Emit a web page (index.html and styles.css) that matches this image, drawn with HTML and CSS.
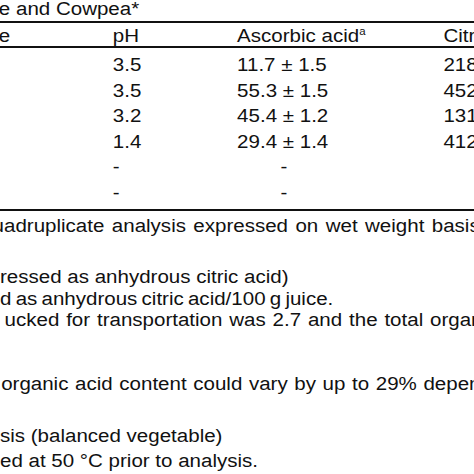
FILE: index.html
```html
<!DOCTYPE html>
<html lang="en">

<head>
    <meta charset="UTF-8">
    <meta name="viewport" content="width=device-width, initial-scale=1.0">
    <title>Table - Juice and Cowpea</title>
    <link rel="stylesheet" href="styles.css">
</head>

<body>
    <div class="sheet">
        <div class="caption">e and Cowpea*</div>

        <div class="table">
            <div class="row head">
                <div class="cell first">e</div>
                <div class="cell">pH</div>
                <div class="cell">Ascorbic acid<sup>a</sup></div>
                <div class="cell">Citric acid</div>
            </div>
            <div class="body">
                <div class="row">
                    <div class="cell first"></div>
                    <div class="cell">3.5</div>
                    <div class="cell">11.7 ± 1.5</div>
                    <div class="cell">218</div>
                </div>
                <div class="row">
                    <div class="cell first"></div>
                    <div class="cell">3.5</div>
                    <div class="cell">55.3 ± 1.5</div>
                    <div class="cell">452</div>
                </div>
                <div class="row">
                    <div class="cell first"></div>
                    <div class="cell">3.2</div>
                    <div class="cell">45.4 ± 1.2</div>
                    <div class="cell">131</div>
                </div>
                <div class="row">
                    <div class="cell first"></div>
                    <div class="cell">1.4</div>
                    <div class="cell">29.4 ± 1.4</div>
                    <div class="cell">412</div>
                </div>
                <div class="row">
                    <div class="cell first"></div>
                    <div class="cell">-</div>
                    <div class="cell dash">-</div>
                    <div class="cell"></div>
                </div>
                <div class="row">
                    <div class="cell first"></div>
                    <div class="cell">-</div>
                    <div class="cell dash">-</div>
                    <div class="cell"></div>
                </div>
            </div>
        </div>

        <div class="notes">
            <div class="note n1">quadruplicate analysis expressed on wet weight basis</div>
            <div class="note n2">ressed as anhydrous citric acid)</div>
            <div class="note n3">d as anhydrous citric acid/100 g juice.</div>
            <div class="note n4">ucked for transportation was 2.7 and the total organic</div>
            <div class="note n5">organic acid content could vary by up to 29% depending</div>
            <div class="note n6">sis (balanced vegetable)</div>
            <div class="note n7">ed at 50 °C prior to analysis.</div>
        </div>
    </div>
</body>

</html>
```

FILE: styles.css
```css
body {
    margin: 0;
    padding: 0;
    background-color: #fff;
    overflow: hidden;
    font-family: "Liberation Sans", Arial, sans-serif;
    font-size: 18px;
    color: #111;
}

/* the scan is stretched sideways a little */
.sheet {
    width: 420px;
    transform: scaleX(1.14);
    transform-origin: 0 0;
}

.caption {
    line-height: 18px;
    margin-bottom: 3px;
    margin-left: -1px;
    white-space: nowrap;
}

.table {
    border-top: 2px solid #111;
    border-bottom: 2px solid #111;
}

.row {
    display: grid;
    grid-template-columns: 99px 109px 181px 1fr;
    white-space: nowrap;
}

.head {
    padding-top: 3px;
    line-height: 20px;
    border-bottom: 2px solid #111;
}

.head sup {
    font-size: 10px;
    line-height: 0;
    vertical-align: 7px;
}

.body {
    padding-top: 5px;
    padding-bottom: 3px;
    line-height: 25.5px;
}

.cell.first {
    margin-left: -1px;
}

.cell.dash {
    padding-left: 38px;
}

.notes {
    margin-top: 5px;
}

.note {
    line-height: 21.5px;
    white-space: nowrap;
}

/* full lines of the footnote are justified */
.n1 {
    text-indent: -16.5px;
    word-spacing: 1.5px;
}

.n2 {
    margin-top: 29.5px;
}

.n3 {
    word-spacing: -1.3px;
}

.n4 {
    text-indent: 4px;
    word-spacing: 1px;
}

.n5 {
    margin-top: 42.5px;
    text-indent: 1px;
    word-spacing: 0.8px;
}

.n6 {
    margin-top: 30.5px;
}

.n7 {
    margin-top: 3.5px;
}
```
